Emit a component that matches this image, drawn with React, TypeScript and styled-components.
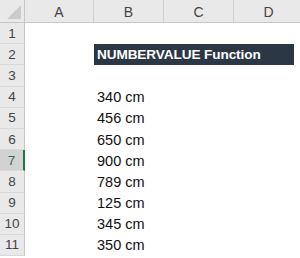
import React from "react";
import styled, { createGlobalStyle } from "styled-components";

const Global = createGlobalStyle`
  html, body { margin: 0; padding: 0; background: #fff; }
  body { width: 300px; height: 258px; overflow: hidden; font-family: "Liberation Sans", Arial, sans-serif; }
`;

const Sheet = styled.div`
  display: grid;
  grid-template-columns: 25px 69px 70px 70px 70px;
  grid-template-rows: 23px repeat(11, 21.2px);
  width: 304px;
  background: #fff;
`;

const Corner = styled.div`
  position: relative;
  background: #e9e9e9;
  border-right: 1px solid #c6c6c6;
  border-bottom: 1px solid #c6c6c6;
  box-sizing: border-box;
  &::after {
    content: "";
    position: absolute;
    right: 3px;
    bottom: 3px;
    width: 0;
    height: 0;
    border-left: 14px solid transparent;
    border-bottom: 14px solid #cbcbcb;
  }
`;

const ColHead = styled.div`
  background: #e9e9e9;
  border-bottom: 1px solid #c6c6c6;
  border-right: 1px solid #d0d0d0;
  box-sizing: border-box;
  display: flex;
  align-items: center;
  justify-content: center;
  font-size: 14px;
  color: #444;
  padding-top: 2px;
`;

const RowHead = styled.div<{ $active?: boolean }>`
  background: ${(p) => (p.$active ? "#d2d2d2" : "#e9e9e9")};
  border-right: ${(p) => (p.$active ? "2px solid #217346" : "1px solid #c6c6c6")};
  border-bottom: 1px solid #d8d8d8;
  box-sizing: border-box;
  display: flex;
  align-items: center;
  justify-content: center;
  font-size: 13.5px;
  color: ${(p) => (p.$active ? "#3a6a4e" : "#444")};
`;

const Cell = styled.div`
  display: flex;
  align-items: center;
  padding-left: 3px;
  font-size: 14.5px;
  color: #111;
  white-space: nowrap;
`;

const TitleCell = styled.div`
  grid-column: 3 / span 3;
  display: flex;
  align-items: stretch;
`;

const TitleBar = styled.div`
  width: 200px;
  background: #2c3745;
  color: #fff;
  font-weight: bold;
  font-size: 13.6px;
  display: flex;
  align-items: center;
  padding-left: 3px;
  box-sizing: border-box;
  letter-spacing: -0.1px;
`;

const values: Record<number, string> = {
  4: "340 cm",
  5: "456 cm",
  6: "650 cm",
  7: "900 cm",
  8: "789 cm",
  9: "125 cm",
  10: "345 cm",
  11: "350 cm",
};

export default function App() {
  const rows = Array.from({ length: 11 }, (_, i) => i + 1);
  return (
    <>
      <Global />
      <Sheet>
        <Corner />
        <ColHead>A</ColHead>
        <ColHead>B</ColHead>
        <ColHead>C</ColHead>
        <ColHead>D</ColHead>
        {rows.map((r) => (
          <React.Fragment key={r}>
            <RowHead $active={r === 7}>{r}</RowHead>
            <Cell />
            {r === 2 ? (
              <TitleCell>
                <TitleBar>NUMBERVALUE Function</TitleBar>
              </TitleCell>
            ) : (
              <>
                <Cell>{values[r] ?? ""}</Cell>
                <Cell />
                <Cell />
              </>
            )}
          </React.Fragment>
        ))}
      </Sheet>
    </>
  );
}
